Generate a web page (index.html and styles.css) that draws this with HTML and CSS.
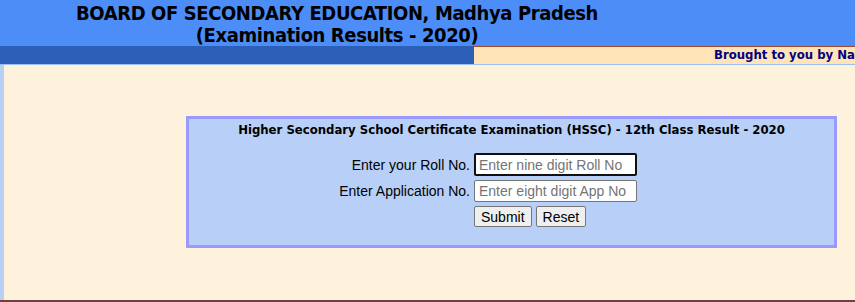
FILE: index.html
```html
<!DOCTYPE html>
<html>
<head>
<meta charset="utf-8">
<title>BSE MP Results 2020</title>
<link rel="stylesheet" href="styles.css">
</head>
<body>
<div class="header">
  <div class="title">BOARD OF SECONDARY EDUCATION, Madhya Pradesh<br>(Examination Results - 2020)</div>
</div>
<div class="bar">
  <div class="bar-left"></div>
  <div class="bar-right"><span class="credit">Brought to you by National Informatics Centre, Madhya Pradesh</span></div>
</div>
<div class="main">
  <div class="strip"></div>
  <div class="content">
    <div class="box">
      <div class="box-title">Higher Secondary School Certificate Examination (HSSC) - 12th Class Result - 2020</div>
      <form class="form">
        <label class="label" for="roll">Enter your Roll No.</label>
        <input class="field field-focus" id="roll" type="text" placeholder="Enter nine digit Roll No">
        <label class="label" for="app">Enter Application No.</label>
        <input class="field" id="app" type="text" placeholder="Enter eight digit App No">
        <span></span>
        <div class="buttons">
          <button class="btn" type="button">Submit</button>
          <button class="btn" type="reset">Reset</button>
        </div>
      </form>
    </div>
  </div>
</div>
<div class="footer-line"></div>
</body>
</html>
```
FILE: styles.css
```css
html, body {
  margin: 0;
  padding: 0;
}
body {
  background: #fff2dc;
  width: 855px;
  height: 302px;
  overflow: hidden;
}
.header {
  background: #4d8df7;
  height: 46px;
  box-sizing: border-box;
  padding-top: 2px;
}
.title {
  width: 674px;
  text-align: center;
  font-family: "DejaVu Sans Condensed", "DejaVu Sans", sans-serif;
  font-weight: bold;
  font-size: 20px;
  letter-spacing: -0.4px;
  line-height: 22px;
  color: #000;
}
.bar {
  display: flex;
  height: 19px;
  box-sizing: border-box;
  border-bottom: 1px solid #9cc0f8;
}
.bar-left {
  width: 474px;
  background: #2b5fb8;
}
.bar-right {
  flex: 1;
  min-width: 0;
  background: #ffe4b8;
  border-top: 1px solid #a04830;
  overflow: hidden;
  white-space: nowrap;
  padding-left: 240px;
  font-family: "DejaVu Sans Condensed", "DejaVu Sans", sans-serif;
  font-weight: bold;
  font-size: 13px;
  line-height: 16px;
  color: #000080;
}
.main {
  display: flex;
  height: 235px;
}
.strip {
  width: 4px;
  background: #b8d0f8;
}
.content {
  flex: 1;
  padding-left: 182px;
  padding-top: 51px;
}
.box {
  width: 651px;
  height: 132px;
  box-sizing: border-box;
  background: #b8d0f8;
  border: 3px solid #9999ff;
  padding-top: 3px;
}
.box-title {
  text-align: center;
  font-family: "DejaVu Sans Condensed", "DejaVu Sans", sans-serif;
  font-weight: bold;
  font-size: 13px;
  line-height: 16px;
  color: #000;
}
.form {
  margin: 15px 0 0 0;
  display: grid;
  grid-template-columns: 281px 200px;
  column-gap: 4px;
  row-gap: 4px;
  align-items: center;
}
.label {
  text-align: right;
  font-family: "Liberation Sans", Arial, sans-serif;
  font-size: 14px;
  color: #000;
}
.field {
  width: 163px;
  height: 22px;
  box-sizing: border-box;
  margin: 0;
  border: 1px solid #767676;
  border-radius: 2px;
  padding: 1px 4px;
  font-family: "Liberation Sans", Arial, sans-serif;
  font-size: 14px;
  background: #fff;
}
.field::placeholder {
  color: #757575;
}
.field-focus {
  border: 2px solid #101010;
  padding: 0 3px;
  height: 23px;
}
.buttons {
  display: flex;
  gap: 4px;
}
.btn {
  margin: 0;
  height: 21px;
  padding: 0 6px;
  background: #efefef;
  border: 1px solid #767676;
  border-radius: 2px;
  font-family: "Liberation Sans", Arial, sans-serif;
  font-size: 14px;
  color: #000;
}
.footer-line {
  height: 2px;
  background: #704040;
}
```
